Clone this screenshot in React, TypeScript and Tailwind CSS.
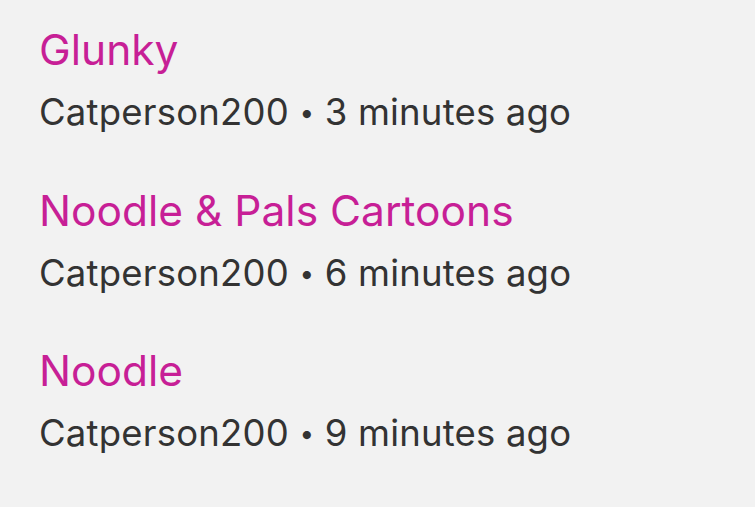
const items = [
  { title: 'Glunky', ago: '3 minutes ago' },
  { title: 'Noodle & Pals Cartoons', ago: '6 minutes ago' },
  { title: 'Noodle', ago: '9 minutes ago' },
];

export default function App() {
  return (
    <div className="min-h-screen w-full bg-[#f2f2f2] pl-[39px] pt-[24px] font-['Inter',sans-serif]">
      <ul className="flex flex-col gap-[49.5px]">
        {items.map((item) => (
          <li key={item.ago} className="flex flex-col">
            <a className="text-[42.5px] leading-[52px] text-[#c71f96]">{item.title}</a>
            <span className="mt-[14px] text-[36.5px] leading-[44px] tracking-[0.2px] text-[#333333]">
              Catperson200 <span className="text-[26px] align-[3px]">•</span> {item.ago}
            </span>
          </li>
        ))}
      </ul>
    </div>
  );
}
